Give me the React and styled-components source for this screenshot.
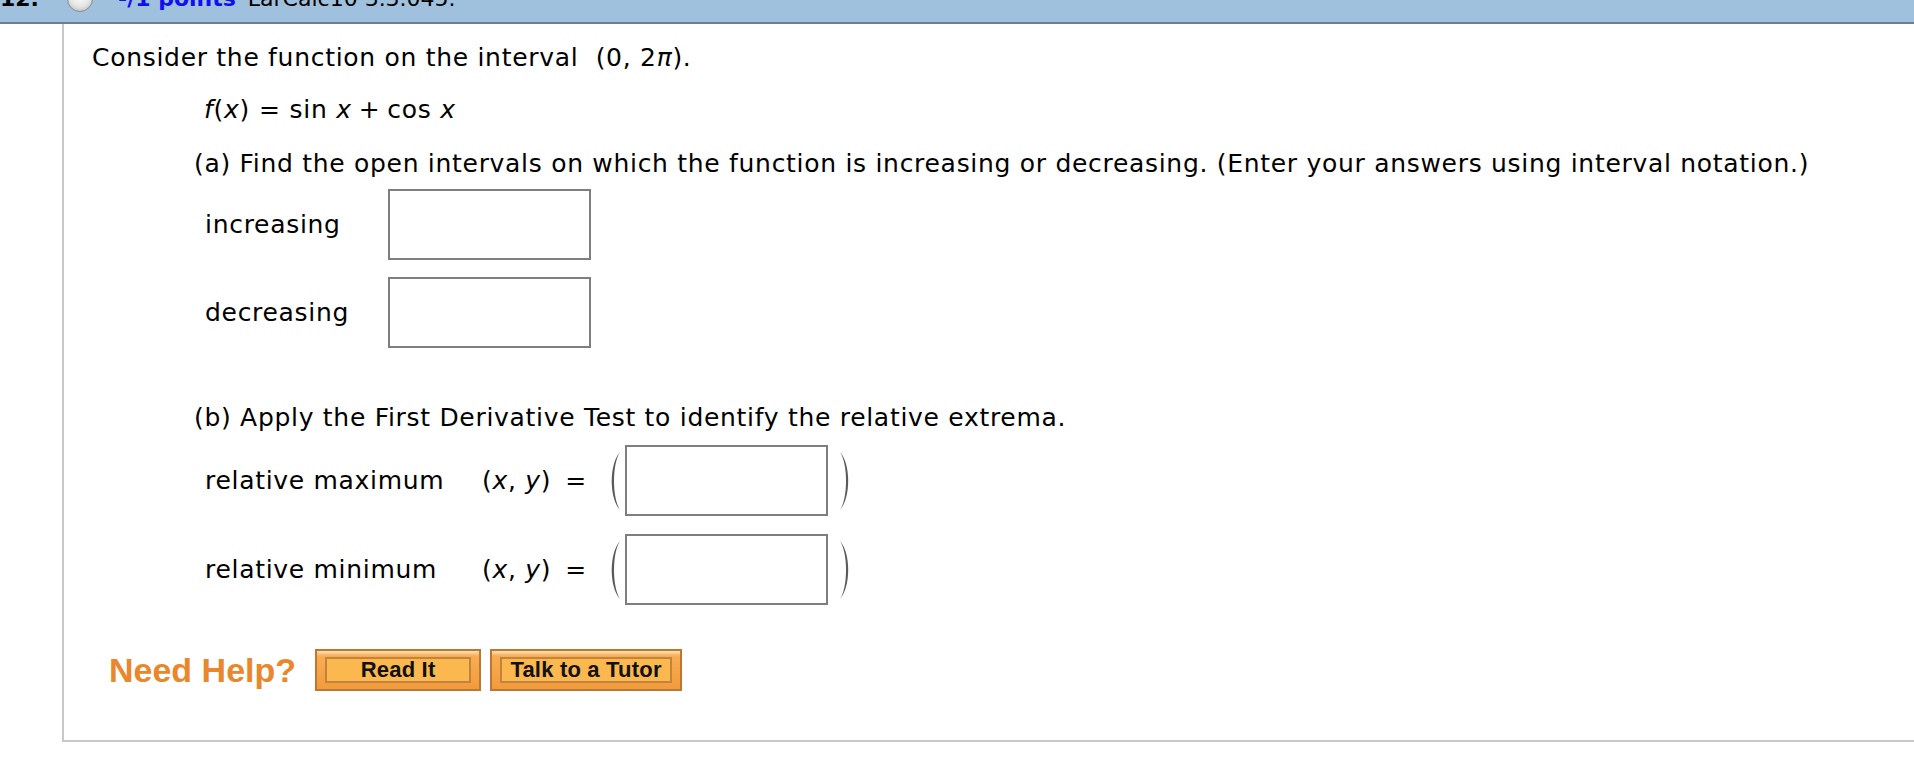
/* --- Packages and Components --- */
import React from 'react';
import styled, { createGlobalStyle } from 'styled-components';

/* --- Styles --- */
const GlobalStyle = createGlobalStyle`
  html, body {
    margin: 0;
    padding: 0;
    background: #ffffff;
  }
  body {
    font-family: 'DejaVu Sans', Verdana, sans-serif;
    color: #000000;
  }
`;

const HeaderBar = styled.div`
  height: 22px;
  overflow: hidden;
  background: #a0c1dd;
  border-bottom: 2px solid #6e7f8f;
  font-size: 22px;
  line-height: 26px;
`;

const HeaderRow = styled.div`
  display: flex;
  align-items: center;
  margin-top: -14px;
  white-space: nowrap;
`;

const QuestionNumber = styled.span`
  font-weight: bold;
  width: 67px;
`;

const StatusIcon = styled.span`
  display: inline-block;
  width: 24px;
  height: 24px;
  border-radius: 50%;
  background: radial-gradient(circle at 50% 40%, #ffffff 0, #e4e4e4 55%, #a9a9a9 100%);
  border: 1px solid #8c8c8c;
  margin-right: 25px;
`;

const Points = styled.span`
  color: #1010ee;
  font-weight: bold;
  margin-right: 12px;
`;

const Source = styled.span`
  color: #000000;
`;

const ContentBox = styled.div`
  margin-left: 62px;
  border-left: 2px solid #c8c8c8;
  border-bottom: 2px solid #c8c8c8;
  padding: 19px 0 49px 28px;
  font-size: 25px;
  line-height: 30px;
  letter-spacing: 0.7px;
`;

const Line = styled.div`
  margin-top: ${props => props.top || 0}px;
  margin-left: ${props => props.indent || 0}px;
  white-space: nowrap;
`;

const I = styled.i`
  font-style: italic;
`;

const Op = styled.span`
  margin: 0 ${props => props.gap || 8}px;
`;

const AnswerRow = styled.div`
  display: flex;
  align-items: center;
  margin-top: ${props => props.top || 0}px;
  margin-left: 113px;
`;

const Label = styled.div`
  width: ${props => props.width}px;
  flex-shrink: 0;
  white-space: nowrap;
`;

const AnswerInput = styled.div`
  width: 199px;
  height: 67px;
  border: 2px solid #7f7f7f;
  background: #ffffff;
  flex-shrink: 0;
`;

const Equation = styled.div`
  width: 124px;
  flex-shrink: 0;
  white-space: nowrap;
`;

const Paren = styled.svg`
  width: 16px;
  height: 60px;
  flex-shrink: 0;
  margin: ${props => (props.right ? '0 0 0 10px' : '0 3px 0 0')};
`;

const HelpRow = styled.div`
  display: flex;
  align-items: center;
  margin-top: 44px;
  margin-left: 17px;
`;

const NeedHelp = styled.span`
  font-family: 'Liberation Sans', Arial, sans-serif;
  font-weight: bold;
  font-size: 34px;
  line-height: 40px;
  letter-spacing: 0;
  color: #ea872c;
  margin-right: 19px;
`;

const HelpButton = styled.div`
  box-sizing: border-box;
  width: ${props => props.width}px;
  height: 42px;
  margin-right: 9px;
  padding: 6px 8px;
  border: 2px solid #bb7733;
  background: linear-gradient(#fde2b9 0, #f8ad52 5px, #f39b3c 100%);
`;

const ButtonFace = styled.div`
  box-sizing: border-box;
  height: 100%;
  border: 2px solid #c08340;
  background: #fbb84e;
  display: flex;
  align-items: center;
  justify-content: center;
  font-family: 'Liberation Sans', Arial, sans-serif;
  font-weight: bold;
  font-size: 22px;
  letter-spacing: 0.2px;
  color: #111111;
  white-space: nowrap;
`;

/* --- Component --- */
const StretchParen = ({ right }) => (
  <Paren viewBox="0 0 16 60" right={right}>
    {right ? (
      <path d="M2 1 C 13 13 13 47 2 59 C 10 47 10 13 2 1 Z" fill="#5a5a5a" />
    ) : (
      <path d="M14 1 C 3 13 3 47 14 59 C 6 47 6 13 14 1 Z" fill="#5a5a5a" />
    )}
  </Paren>
);

const PointAnswer = ({ label, top }) => (
  <AnswerRow top={top}>
    <Label width={277}>{label}</Label>
    <Equation>
      (<I>x</I>, <I>y</I>)<Op gap={14}>=</Op>
    </Equation>
    <StretchParen />
    <AnswerInput />
    <StretchParen right />
  </AnswerRow>
);

const App = () => (
  <>
    <GlobalStyle />
    <HeaderBar>
      <HeaderRow>
        <QuestionNumber>12.</QuestionNumber>
        <StatusIcon />
        <Points>-/1 points</Points>
        <Source>LarCalc10 3.3.045.</Source>
      </HeaderRow>
    </HeaderBar>
    <ContentBox>
      <Line>
        Consider the function on the interval&nbsp;&nbsp;(0, 2<I>π</I>).
      </Line>
      <Line top={22} indent={112}>
        <I>f</I>(<I>x</I>)<Op gap={9}>=</Op>sin <I>x</I>
        <Op gap={7}>+</Op>cos <I>x</I>
      </Line>
      <Line top={24} indent={102}>
        (a) Find the open intervals on which the function is increasing or
        decreasing. (Enter your answers using interval notation.)
      </Line>
      <AnswerRow top={10}>
        <Label width={183}>increasing</Label>
        <AnswerInput />
      </AnswerRow>
      <AnswerRow top={17}>
        <Label width={183}>decreasing</Label>
        <AnswerInput />
      </AnswerRow>
      <Line top={55} indent={102}>
        (b) Apply the First Derivative Test to identify the relative extrema.
      </Line>
      <PointAnswer label="relative maximum" top={12} />
      <PointAnswer label="relative minimum" top={18} />
      <HelpRow>
        <NeedHelp>Need Help?</NeedHelp>
        <HelpButton width={166}>
          <ButtonFace>Read It</ButtonFace>
        </HelpButton>
        <HelpButton width={192}>
          <ButtonFace>Talk to a Tutor</ButtonFace>
        </HelpButton>
      </HelpRow>
    </ContentBox>
  </>
);

export default App;
